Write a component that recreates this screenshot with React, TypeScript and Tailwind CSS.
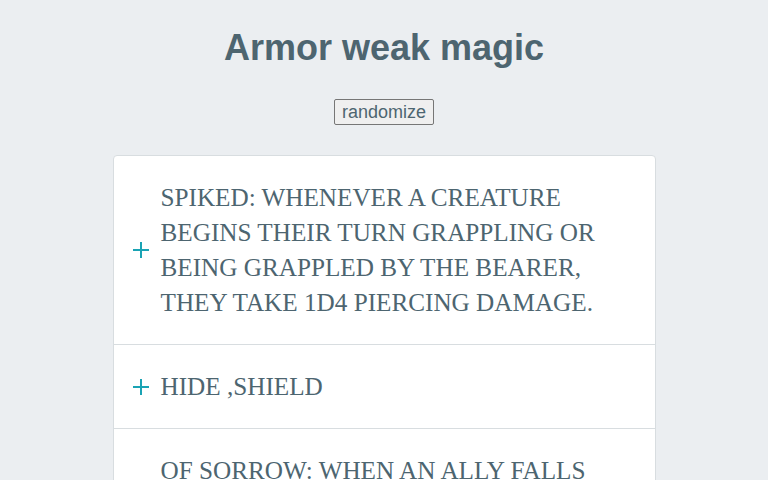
import React from "react";

const items = [
  "SPIKED: WHENEVER A CREATURE BEGINS THEIR TURN GRAPPLING OR BEING GRAPPLED BY THE BEARER, THEY TAKE 1D4 PIERCING DAMAGE.",
  "HIDE ,SHIELD",
  "OF SORROW: WHEN AN ALLY FALLS UNCONSCIOUS WITHIN 30 FEET OF THE BEARER, THEY GAIN ADVANTAGE ON THEIR NEXT ATTACK.",
];

const Plus = () => (
  <svg width="16" height="16" viewBox="0 0 16 16" className="shrink-0">
    <path d="M8 0v16M0 8h16" stroke="#1aa3b4" strokeWidth="2" />
  </svg>
);

export default function App() {
  return (
    <div className="min-h-screen bg-[#ebeef1] text-[#4d6570] pt-[27px] flex flex-col items-center">
      <h1 className="font-['Liberation_Sans',Arial,sans-serif] font-bold text-[36px] leading-[42px]">
        Armor weak magic
      </h1>
      <button className="mt-[30px] font-['Liberation_Sans',Arial,sans-serif] text-[18px] leading-[20px] px-[7px] py-[2px] border border-[#767676] rounded-[2px] bg-[#efefef]">
        randomize
      </button>
      <div className="mt-[30px] w-[543px] bg-white border border-[#d8dde0] rounded-[4px]">
        {items.map((t, i) => (
          <div
            key={i}
            className={
              "flex items-center gap-[12px] pl-[19px] pr-[24px] py-[24px] " +
              (i > 0 ? "border-t border-[#d8dde0]" : "")
            }
          >
            <Plus />
            <p className="font-['Liberation_Serif','Times_New_Roman',serif] text-[25.2px] leading-[35px]">
              {t}
            </p>
          </div>
        ))}
      </div>
    </div>
  );
}
